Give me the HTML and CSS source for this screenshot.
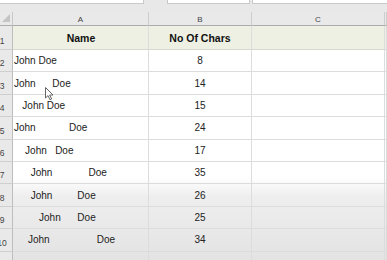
FILE: index.html
```html
<!DOCTYPE html>
<html lang="en">

<head>
    <meta charset="UTF-8">
    <title>Name length</title>
    <link rel="stylesheet" href="styles.css">
</head>

<body>

    <div class="bar">
        <div class="box name-box"></div>
        <div class="box fx-box"></div>
        <div class="box formula"></div>
    </div>

    <div class="sheet">
        <!-- column headers -->
        <div class="corner">
            <svg width="10" height="9" viewBox="0 0 10 9"><polygon points="1,8 9,8 9,0" fill="#c4c4c4" /></svg>
        </div>
        <div class="col-head">A</div>
        <div class="col-head">B</div>
        <div class="col-head">C</div>
        <div class="col-head"></div>

        <div class="row-head">1</div>
        <div class="cell title">Name</div>
        <div class="cell title num">No Of Chars</div>
        <div class="cell title"></div>
        <div class="cell title"></div>

        <div class="row-head">2</div>
        <div class="cell">John Doe</div>
        <div class="cell num">8</div>
        <div class="cell"></div>
        <div class="cell"></div>

        <div class="row-head">3</div>
        <div class="cell">John      Doe</div>
        <div class="cell num">14</div>
        <div class="cell"></div>
        <div class="cell"></div>

        <div class="row-head">4</div>
        <div class="cell">   John Doe</div>
        <div class="cell num">15</div>
        <div class="cell"></div>
        <div class="cell"></div>

        <div class="row-head">5</div>
        <div class="cell">John            Doe</div>
        <div class="cell num">24</div>
        <div class="cell"></div>
        <div class="cell"></div>

        <div class="row-head">6</div>
        <div class="cell">    John   Doe</div>
        <div class="cell num">17</div>
        <div class="cell"></div>
        <div class="cell"></div>

        <div class="row-head">7</div>
        <div class="cell">      John             Doe</div>
        <div class="cell num">35</div>
        <div class="cell"></div>
        <div class="cell"></div>

        <div class="row-head">8</div>
        <div class="cell">      John         Doe</div>
        <div class="cell num">26</div>
        <div class="cell"></div>
        <div class="cell"></div>

        <div class="row-head">9</div>
        <div class="cell">         John      Doe</div>
        <div class="cell num">25</div>
        <div class="cell"></div>
        <div class="cell"></div>

        <div class="row-head">10</div>
        <div class="cell">     John                 Doe</div>
        <div class="cell num">34</div>
        <div class="cell"></div>
        <div class="cell"></div>

        <div class="row-head"></div>
        <div class="cell"></div>
        <div class="cell num"></div>
        <div class="cell"></div>
        <div class="cell"></div>
    </div>

    <!-- mouse pointer -->
    <svg class="pointer" width="9" height="14" viewBox="0 0 9 14">
        <path d="M0.5 0.5 L0.5 11 L3 8.6 L5 12.8 L6.6 12 L4.7 8 L8 8 Z" fill="#fff" stroke="#555" stroke-width="0.9" stroke-linejoin="round" />
    </svg>

</body>

</html>
```

FILE: styles.css
```css
* { box-sizing: border-box; }
body { margin: 0; position: relative; overflow: hidden; width: 387px; height: 260px; background: #e8e8e8; font-family: "Liberation Sans", Arial, sans-serif; }

.bar { display: flex; height: 12px; background: #e8e8e8; }
.bar .box { height: 4px; background: #fff; border-bottom: 1px solid #c9c9c9; }
.bar .name-box { width: 144px; border-right: 1px solid #c9c9c9; }
.bar .fx-box { width: 83px; margin-left: 23px; border-left: 1px solid #c9c9c9; border-right: 1px solid #c9c9c9; }
.bar .formula { flex: 1; margin-left: 2px; border-left: 1px solid #c9c9c9; }

.sheet { display: grid; margin-left: -8px; grid-template-columns: 21px 136px 103px 133px 1fr; grid-template-rows: 14px 24px repeat(10, 22.4px);
    background: linear-gradient(to bottom, #fff 0, #fff 165px, #eeeeee 185px, #e3e3e3 250px); }

.sheet .corner { display: flex; align-items: flex-end; justify-content: flex-end; padding: 0 1px 2px 0; background: #e9e9e9; border-right: 1px solid #c9c9c9; border-bottom: 1px solid #acacac; }
.sheet .col-head { display: flex; align-items: center; justify-content: center; padding-top: 1px; font-size: 8px; color: #444; background: #e9e9e9; border-right: 1px solid #cdcdcd; border-bottom: 1px solid #acacac; }

.sheet .row-head { display: flex; align-items: flex-end; justify-content: center; padding-bottom: 2px; line-height: 12px; font-size: 8.5px; color: #444; background: #e9e9e9; border-right: 1px solid #bdbdbd; border-bottom: 1px solid #cfcfcf; }

.sheet .cell { display: flex; align-items: center; padding-left: 1px; font-size: 10px; color: #222; white-space: pre; border-right: 1px solid #dcdcdc; border-bottom: 1px solid #dcdcdc; }
.sheet .num { justify-content: center; padding-left: 0; }
.sheet .title { justify-content: center; font-weight: bold; font-size: 10.5px; color: #111; background: #edf0e3; border-bottom-color: #d6d9cf; }

.pointer { position: absolute; left: 45px; top: 87px; }
```
